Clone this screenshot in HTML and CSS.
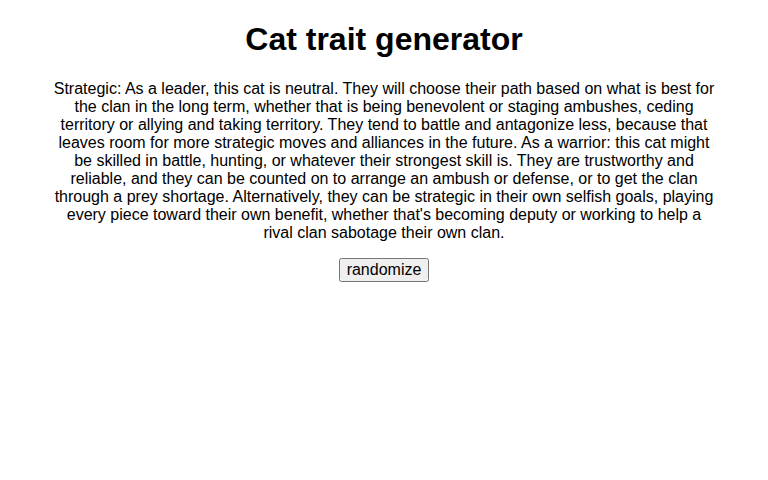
FILE: index.html
```html
<!DOCTYPE html>
<html lang="en">
    <head>
        <meta charset="UTF-8" />
        <meta name="viewport" content="width=device-width, initial-scale=1.0" />
        <title>Cat trait generator</title>
        <link rel="stylesheet" href="styles.css">
    </head>
    <body>
        <div class="generator">
            <h1>Cat trait generator</h1>
            <p class="trait">
                Strategic: As a leader, this cat is neutral. They will choose their path based on what is best for the clan in the long term, whether that is being benevolent or staging ambushes, ceding territory or allying and taking territory. They tend to battle and antagonize less, because that leaves room for more strategic moves and alliances in the future. As a warrior: this cat might be skilled in battle, hunting, or whatever their strongest skill is. They are trustworthy and reliable, and they can be counted on to arrange an ambush or defense, or to get the clan through a prey shortage. Alternatively, they can be strategic in their own selfish goals, playing every piece toward their own benefit, whether that's becoming deputy or working to help a rival clan sabotage their own clan.
            </p>
            <button type="button" class="randomize">randomize</button>
        </div>
    </body>
</html>
```

FILE: styles.css
```css
body {
    margin: 0;
    font-family: "Liberation Sans", Arial, sans-serif;
    color: #000;
    background: #fff;
}

.generator {
    text-align: center;
}

.trait {
    max-width: 662px;
    margin: 16px auto;
    font-size: 16px;
    line-height: 18px;
}

.randomize {
    font-family: "Liberation Sans", Arial, sans-serif;
    font-size: 16px;
}
```
